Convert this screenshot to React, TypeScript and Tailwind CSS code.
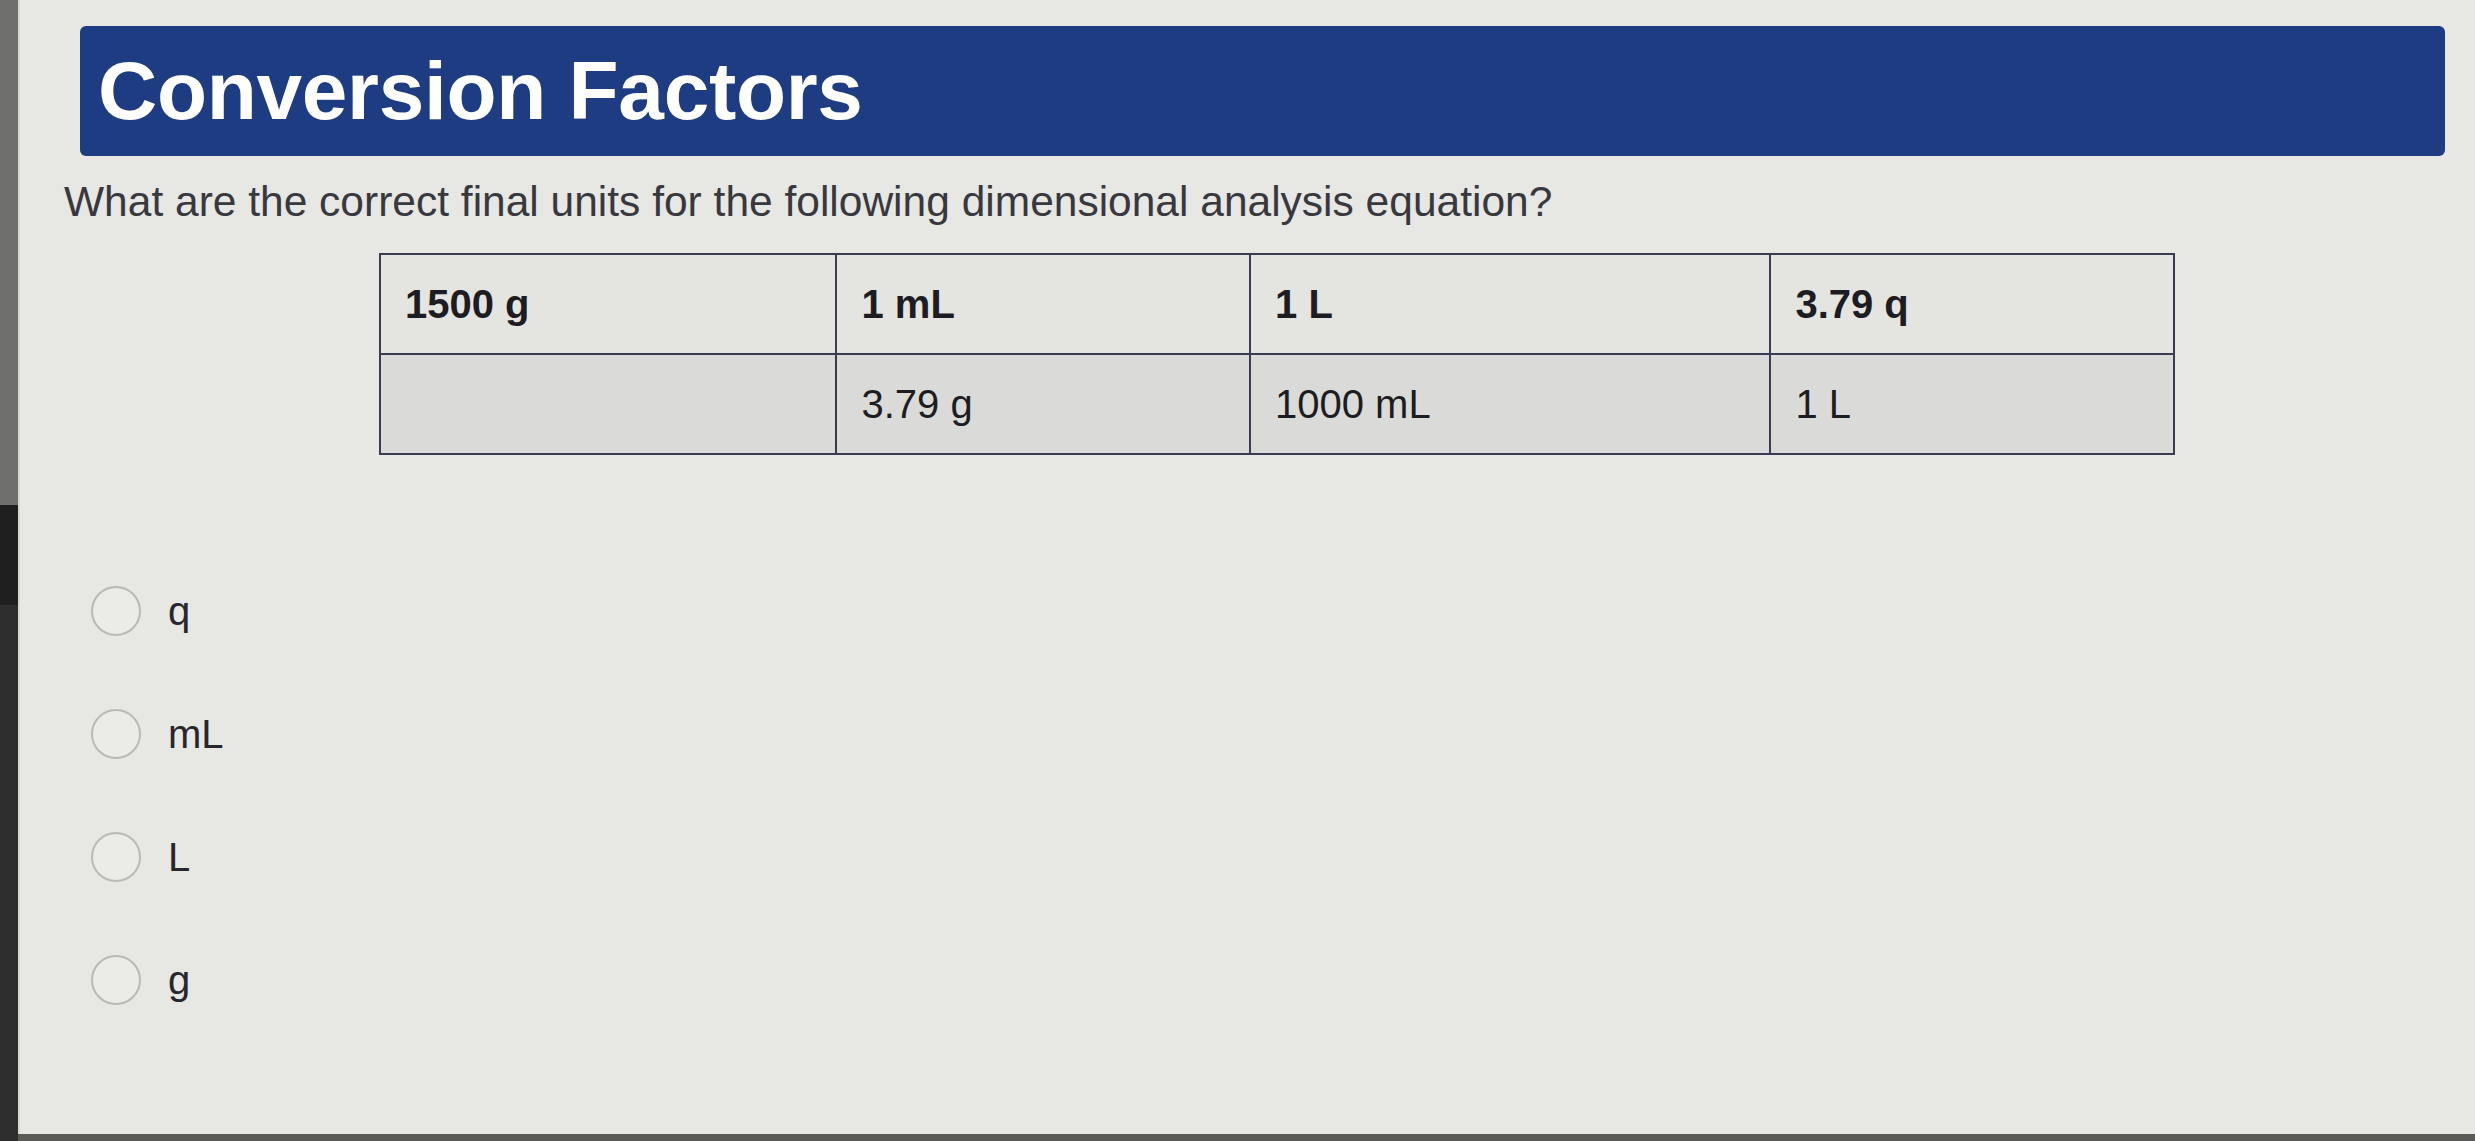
import React from "react";

const font = { fontFamily: '"Liberation Sans", Arial, Helvetica, sans-serif' };

const row1 = ["1500 g", "1 mL", "1 L", "3.79 q"];
const row2 = ["", "3.79 g", "1000 mL", "1 L"];
const widths = ["w-[457px]", "w-[414px]", "w-[521px]", "w-[404px]"];
const options = ["q", "mL", "L", "g"];

export default function App() {
  return (
    <div className="flex h-[1141px] w-full overflow-hidden" style={font}>
      <div className="flex w-[18px] flex-col">
        <div className="h-[505px] bg-[#6f6f6d]" />
        <div className="h-[100px] bg-[#1f1f1f]" />
        <div className="flex-1 bg-[#2e2e2e]" />
      </div>
      <div className="flex flex-1 flex-col">
        <div className="flex flex-1 flex-col bg-[#e7e7e3] border-l-2 border-[#d8d8d4]">
          <div className="ml-[60px] mr-[30px] mt-[26px] flex h-[130px] items-center rounded-md bg-[#1e3c82] pl-[18px]">
            <h1 className="text-[82px] font-bold leading-none tracking-[-0.3px] text-white">
              Conversion Factors
            </h1>
          </div>
          <p className="ml-[44px] mt-[25px] text-[42.5px] leading-[42px] text-[#38383f]">
            What are the correct final units for the following dimensional analysis equation?
          </p>
          <table className="ml-[359px] mt-[30px] w-[1796px] border-collapse border-2 border-[#3a3c52] text-[40px] text-[#1c1c22]">
            <tbody>
              <tr className="h-[100px] bg-[#e4e4e1]">
                {row1.map((t, i) => (
                  <td
                    key={i}
                    className={`${widths[i]} border-2 border-[#3a3c52] pl-[24px] align-middle font-bold`}
                  >
                    {t}
                  </td>
                ))}
              </tr>
              <tr className="h-[100px] bg-[#dadad8]">
                {row2.map((t, i) => (
                  <td
                    key={i}
                    className={`${widths[i]} border-2 border-[#3a3c52] pl-[24px] align-middle`}
                  >
                    {t}
                  </td>
                ))}
              </tr>
            </tbody>
          </table>
          <div className="ml-[71px] mt-[131px] flex flex-col gap-[73px]">
            {options.map((o) => (
              <label key={o} className="flex h-[50px] items-center gap-[27px]">
                <span className="h-[50px] w-[50px] rounded-full border-2 border-[#b9b9b6] bg-[#ebebe8]" />
                <span className="text-[40px] leading-none text-[#26262c]">{o}</span>
              </label>
            ))}
          </div>
        </div>
        <div className="h-[7px] bg-[#5a5a56]" />
      </div>
    </div>
  );
}
